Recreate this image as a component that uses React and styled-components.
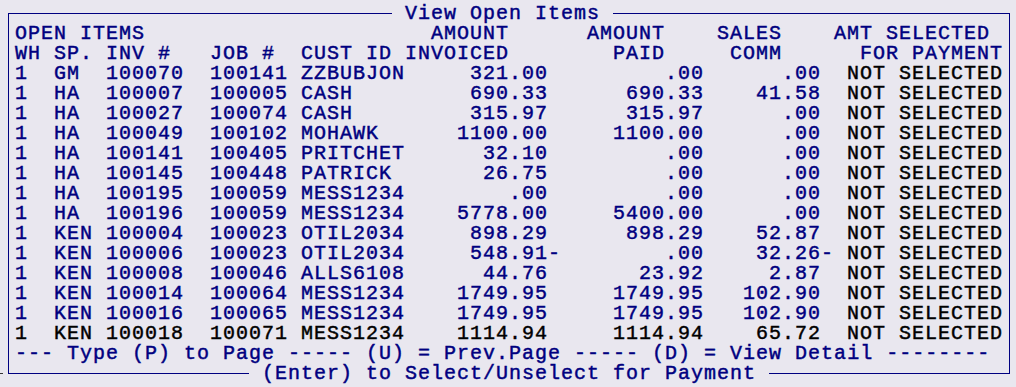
import React from "react";
import styled, { createGlobalStyle } from "styled-components";

const CW = 13; // one terminal cell, px
const NAVY = "#000080";
const INK = "#000000";
const PAPER = "#e9e7ef";

const Global = createGlobalStyle`
  html, body {
    margin: 0;
    padding: 0;
    background: ${PAPER};
  }
  body {
    font-family: "Liberation Mono", "DejaVu Sans Mono", monospace;
    font-size: 20px;
    font-weight: normal;
    letter-spacing: 1px;
    -webkit-text-stroke: 0.45px currentColor;
    color: ${NAVY};
  }
`;

const Screen = styled.main`
  width: 1016px;
  height: 387px;
  box-sizing: border-box;
  padding: 3px 0 0 8px;
  overflow: hidden;
`;

const Frame = styled.section`
  width: 1002px;
  display: flex;
  flex-direction: column;
`;

const Edge = styled.div`
  position: relative;
  display: flex;
  height: 20px;
  align-items: ${(p) => (p.$bottom ? "flex-start" : "flex-end")};

  ${(p) =>
    p.$bottom &&
    `
    &::before {
      content: "";
      position: absolute;
      left: -8px;
      top: 10px;
      width: 3px;
      height: 1px;
      background: #333;
    }
  `}
`;

const Rule = styled.div`
  box-sizing: border-box;
  flex: ${(p) => (p.$cells ? "none" : "1")};
  width: ${(p) => (p.$cells ? `${p.$cells}px` : "auto")};
  height: ${(p) => (p.$bottom ? "11px" : "10px")};
  border-color: ${NAVY};
  border-style: solid;
  border-width: 0;
  ${(p) => (p.$bottom ? "border-bottom-width: 1px;" : "border-top-width: 1px;")}
  ${(p) => (p.$side === "left" ? "border-left-width: 1px;" : "")}
  ${(p) => (p.$side === "right" ? "border-right-width: 1px;" : "")}
`;

const EdgeLabel = styled.span`
  flex: none;
  align-self: stretch;
  box-sizing: border-box;
  height: 20px;
  padding-top: 1px;
  line-height: 19px;
  width: ${(p) => p.$cells * CW}px;
  text-align: center;
  white-space: pre;
  color: ${NAVY};
`;

const Body = styled.div`
  border-left: 1px solid ${NAVY};
  border-right: 1px solid ${NAVY};
  padding-left: 6px;
`;

const COLS = [3, 4, 8, 7, 8, 12, 11, 10, 13];

const Row = styled.div`
  display: grid;
  grid-template-columns: ${COLS.map((c) => `${c * CW}px`).join(" ")};
  box-sizing: border-box;
  height: 20px;
  padding-top: 1px;
  line-height: 19px;
  color: ${(p) => (p.$current ? INK : NAVY)};
`;

const Cell = styled.span`
  grid-column: span ${(p) => p.$span || 1};
  text-align: ${(p) => p.$align || "left"};
  padding-right: ${(p) => (p.$pad || 0) * CW}px;
  white-space: pre;
  color: ${(p) => (p.$ink ? INK : "inherit")};
`;

const Prompt = styled.div`
  box-sizing: border-box;
  height: 20px;
  padding-top: 1px;
  line-height: 19px;
  white-space: pre;
  color: ${NAVY};
`;

const items = [
  ["1", "GM", "100070", "100141", "ZZBUBJON", "321.00", ".00", ".00"],
  ["1", "HA", "100007", "100005", "CASH", "690.33", "690.33", "41.58"],
  ["1", "HA", "100027", "100074", "CASH", "315.97", "315.97", ".00"],
  ["1", "HA", "100049", "100102", "MOHAWK", "1100.00", "1100.00", ".00"],
  ["1", "HA", "100141", "100405", "PRITCHET", "32.10", ".00", ".00"],
  ["1", "HA", "100145", "100448", "PATRICK", "26.75", ".00", ".00"],
  ["1", "HA", "100195", "100059", "MESS1234", ".00", ".00", ".00"],
  ["1", "HA", "100196", "100059", "MESS1234", "5778.00", "5400.00", ".00"],
  ["1", "KEN", "100004", "100023", "OTIL2034", "898.29", "898.29", "52.87"],
  ["1", "KEN", "100006", "100023", "OTIL2034", "548.91-", ".00", "32.26-"],
  ["1", "KEN", "100008", "100046", "ALLS6108", "44.76", "23.92", "2.87"],
  ["1", "KEN", "100014", "100064", "MESS1234", "1749.95", "1749.95", "102.90"],
  ["1", "KEN", "100016", "100065", "MESS1234", "1749.95", "1749.95", "102.90"],
  ["1", "KEN", "100018", "100071", "MESS1234", "1114.94", "1114.94", "65.72"],
];

const signed = (v) => (v.endsWith("-") ? v : `${v} `);

export default function App() {
  return (
    <>
      <Global />
      <Screen>
        <Frame>
          <Edge>
            <Rule $side="left" $cells={384} />
            <EdgeLabel $cells={17}>View Open Items</EdgeLabel>
            <Rule $side="right" />
          </Edge>

          <Body>
            <Row>
              <Cell $span={5}>OPEN ITEMS</Cell>
              <Cell $align="right" $pad={4}>AMOUNT</Cell>
              <Cell $align="right" $pad={3}>AMOUNT</Cell>
              <Cell $align="right" $pad={4}>SALES</Cell>
              <Cell>AMT SELECTED</Cell>
            </Row>
            <Row>
              <Cell>WH</Cell>
              <Cell>SP.</Cell>
              <Cell>INV #</Cell>
              <Cell>JOB #</Cell>
              <Cell>CUST ID</Cell>
              <Cell $align="right" $pad={4}>INVOICED</Cell>
              <Cell $align="right" $pad={3}>PAID</Cell>
              <Cell $align="right" $pad={4}>COMM</Cell>
              <Cell $align="right">FOR PAYMENT</Cell>
            </Row>
            {items.map((r, i) => (
              <Row key={r[2]} $current={i === items.length - 1}>
                <Cell>{r[0]}</Cell>
                <Cell>{r[1]}</Cell>
                <Cell>{r[2]}</Cell>
                <Cell>{r[3]}</Cell>
                <Cell>{r[4]}</Cell>
                <Cell $align="right">{signed(r[5])}</Cell>
                <Cell $align="right">{r[6]}</Cell>
                <Cell $align="right">{signed(r[7])}</Cell>
                <Cell $align="right" $ink>
                  NOT SELECTED
                </Cell>
              </Row>
            ))}
            <Prompt>
              {"--- Type (P) to Page ----- (U) = Prev.Page ----- (D) = View Detail --------"}
            </Prompt>
          </Body>

          <Edge $bottom>
            <Rule $bottom $side="left" $cells={241} />
            <EdgeLabel $cells={40}>(Enter) to Select/Unselect for Payment</EdgeLabel>
            <Rule $bottom $side="right" />
          </Edge>
        </Frame>
      </Screen>
    </>
  );
}
